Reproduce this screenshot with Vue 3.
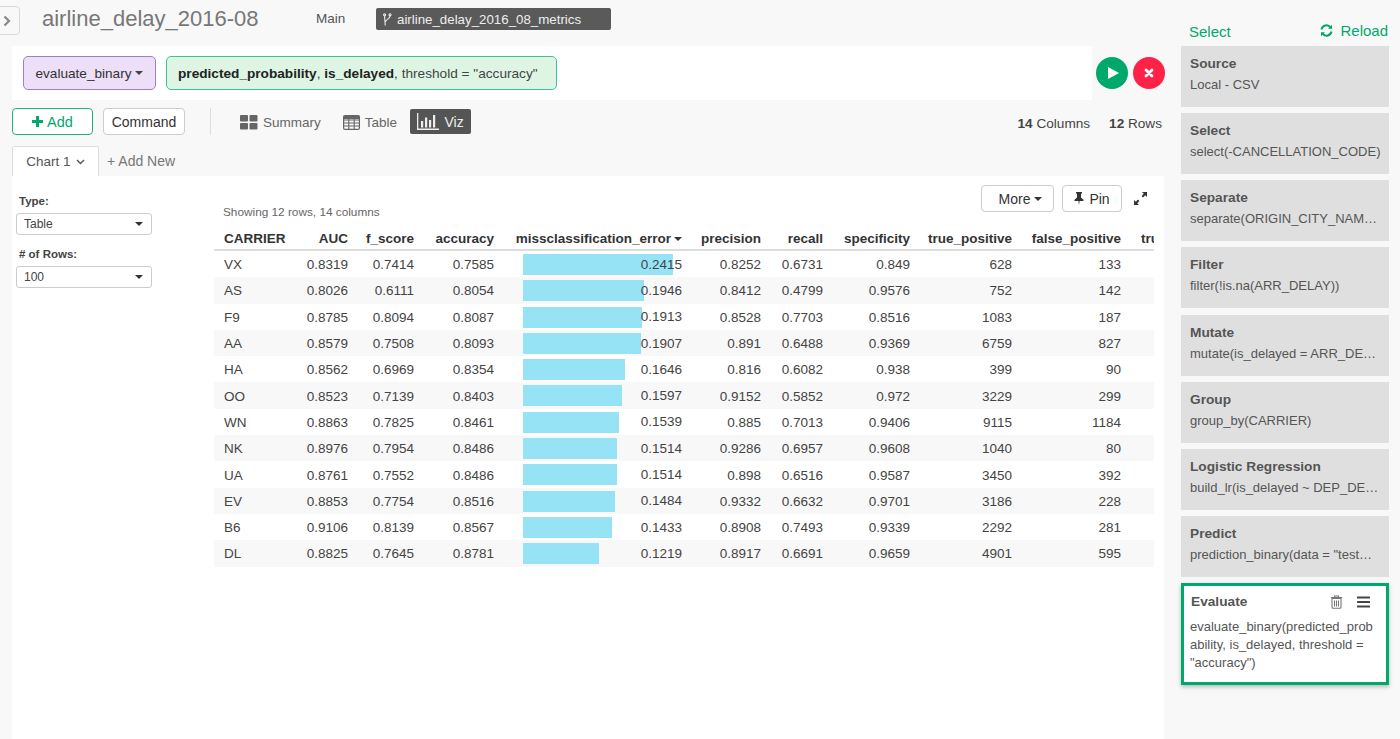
<script setup>
const columns = ['CARRIER','AUC','f_score','accuracy','missclassification_error','precision','recall','specificity','true_positive','false_positive','true_negative']
const rows = [
  ['VX','0.8319','0.7414','0.7585','0.2415','0.8252','0.6731','0.849','628','133',''],
  ['AS','0.8026','0.6111','0.8054','0.1946','0.8412','0.4799','0.9576','752','142',''],
  ['F9','0.8785','0.8094','0.8087','0.1913','0.8528','0.7703','0.8516','1083','187',''],
  ['AA','0.8579','0.7508','0.8093','0.1907','0.891','0.6488','0.9369','6759','827',''],
  ['HA','0.8562','0.6969','0.8354','0.1646','0.816','0.6082','0.938','399','90',''],
  ['OO','0.8523','0.7139','0.8403','0.1597','0.9152','0.5852','0.972','3229','299',''],
  ['WN','0.8863','0.7825','0.8461','0.1539','0.885','0.7013','0.9406','9115','1184',''],
  ['NK','0.8976','0.7954','0.8486','0.1514','0.9286','0.6957','0.9608','1040','80',''],
  ['UA','0.8761','0.7552','0.8486','0.1514','0.898','0.6516','0.9587','3450','392',''],
  ['EV','0.8853','0.7754','0.8516','0.1484','0.9332','0.6632','0.9701','3186','228',''],
  ['B6','0.9106','0.8139','0.8567','0.1433','0.8908','0.7493','0.9339','2292','281',''],
  ['DL','0.8825','0.7645','0.8781','0.1219','0.8917','0.6691','0.9659','4901','595','']
]
const barWidth = (v) => (Number(v) / 0.2415) * 150 + 'px'
const steps = [
  ['Source','Local - CSV'],
  ['Select','select(-CANCELLATION_CODE)'],
  ['Separate','separate(ORIGIN_CITY_NAM…'],
  ['Filter','filter(!is.na(ARR_DELAY))'],
  ['Mutate','mutate(is_delayed = ARR_DE…'],
  ['Group','group_by(CARRIER)'],
  ['Logistic Regression','build_lr(is_delayed ~ DEP_DE…'],
  ['Predict','prediction_binary(data = "test…']
]
</script>

<template>
  <div class="app">
    <div class="main">
      <header class="top">
        <button class="toggle">
          <svg width="8" height="12" viewBox="0 0 8 12"><path d="M1.500 1.500 6 6l-4.500 4.500" fill="none" stroke="#888" stroke-width="2.200"/></svg>
        </button>
        <h1 class="title">airline_delay_2016-08</h1>
        <span class="main-link">Main</span>
        <div class="branch">
          <svg width="9" height="13" viewBox="0 0 9 13"><g fill="none" stroke="#eee" stroke-width="1.100"><circle cx="1.600" cy="1.800" r="1"/><circle cx="7" cy="1.800" r="1"/><path d="M1.600 3c0 3 .6 5 .6 9.500M7 3c0 2.800-4 3.200-4.600 6"/></g></svg>
          <span>airline_delay_2016_08_metrics</span>
        </div>
      </header>

      <section class="command-row">
        <div class="command-box">
          <div class="fn-pill">evaluate_binary <i class="caret"></i></div>
          <div class="arg-pill"><b>predicted_probability</b>, <b>is_delayed</b>, threshold = "accuracy"</div>
        </div>
        <div class="round green">
          <svg width="14" height="14" viewBox="0 0 14 14"><path d="M2 1l11 6-11 6z" fill="#fff"/></svg>
        </div>
        <div class="round red">
          <svg width="10" height="10" viewBox="0 0 10 10"><path d="M2 2l6 6M8 2l-6 6" stroke="#fff" stroke-width="2.800" stroke-linecap="round"/></svg>
        </div>
      </section>

      <section class="toolbar">
        <button class="btn add">
          <svg width="11" height="11" viewBox="0 0 11 11"><path d="M5.500 0v11M0 5.500h11" stroke="#00a86b" stroke-width="3"/></svg>
          Add
        </button>
        <button class="btn command">Command</button>
        <span class="divider"></span>
        <div class="view">
          <svg width="18" height="15" viewBox="0 0 18 15" fill="#666"><rect x="0" y="0" width="8" height="6.500" rx="1"/><rect x="9.500" y="0" width="8" height="6.500" rx="1"/><rect x="0" y="8" width="8" height="6.500" rx="1"/><rect x="9.500" y="8" width="8" height="6.500" rx="1"/></svg>
          Summary
        </div>
        <div class="view table-view">
          <svg width="17" height="15" viewBox="0 0 17 15"><rect x="0.600" y="0.600" width="15.800" height="13.800" rx="1.500" fill="none" stroke="#666" stroke-width="1.200"/><path d="M0.600 5h15.800M0.600 8h15.800M0.600 11h15.800M5.800 1v13M11.200 1v13" stroke="#666" stroke-width="1.100"/><rect x="0.600" y="0.600" width="15.800" height="3.400" fill="#666"/></svg>
          Table
        </div>
        <div class="view viz">
          <svg width="22" height="17" viewBox="0 0 22 17" fill="#eee"><path d="M0 0h1.300v15.500H22V17H0z"/><rect x="4" y="8" width="2.200" height="6.500"/><rect x="8" y="4.500" width="2.200" height="10"/><rect x="12" y="7" width="2.200" height="7.500"/><rect x="16" y="2" width="2.200" height="12.500"/></svg>
          Viz
        </div>
        <div class="counts"><span><b>14</b> Columns</span><span><b>12</b> Rows</span></div>
      </section>

      <nav class="tabs">
        <div class="tab">Chart 1
          <svg width="9" height="6" viewBox="0 0 9 6"><path d="M1 1l3.500 3.500L8 1" fill="none" stroke="#555" stroke-width="1.400"/></svg>
        </div>
        <div class="add-new">+ Add New</div>
      </nav>

      <section class="panel">
        <aside class="filters">
          <label class="f-label">Type:</label>
          <div class="select">Table <i class="caret dark"></i></div>
          <label class="f-label rows-label"># of Rows:</label>
          <div class="select">100 <i class="caret dark"></i></div>
        </aside>
        <div class="content">
          <div class="content-top">
            <span class="showing">Showing 12 rows, 14 columns</span>
            <div class="actions">
              <button class="btn more">More <i class="caret dark"></i></button>
              <button class="btn pin">
                <svg width="10" height="13" viewBox="0 0 10 13" fill="#333"><path d="M2 0h6v1.200L7 2v3.500l2.500 2.300V9H5.600L5 13l-.6-4H.5V7.800L3 5.500V2L2 1.200z"/></svg>
                Pin
              </button>
              <svg class="expand" width="13" height="13" viewBox="0 0 13 13" fill="#333"><path d="M8 0h5v5l-1.800-1.800L9 5.400 7.600 4l2.200-2.200zM5 13H0V8l1.800 1.800L4 7.600 5.400 9l-2.200 2.200z"/></svg>
            </div>
          </div>
          <div class="table">
            <div class="tr head">
              <div v-for="(c, i) in columns" :key="c" class="cell" :class="{ left: i === 0 }">{{ c }}<i v-if="i === 4" class="caret dark sort"></i></div>
            </div>
            <div v-for="row in rows" :key="row[0]" class="tr">
              <div v-for="(v, i) in row" :key="i" class="cell" :class="{ left: i === 0, barcell: i === 4 }">
                <span v-if="i === 4" class="bar" :style="{ width: barWidth(v) }"></span>
                <span class="val">{{ v }}</span>
              </div>
            </div>
          </div>
        </div>
      </section>
    </div>

    <aside class="side">
      <div class="side-head">
        <span class="side-select">Select</span>
        <span class="reload">
          <svg width="13" height="13" viewBox="0 0 13 13" fill="none" stroke="#00a86b" stroke-width="2"><path d="M1.500 5.500A5 5 0 0 1 10.500 3.500M11.500 7.500A5 5 0 0 1 2.500 9.500"/><path d="M12 .8v4H8zM1 12.200v-4h4z" fill="#00a86b" stroke="none"/></svg>
          Reload
        </span>
      </div>
      <div v-for="s in steps" :key="s[0]" class="card">
        <div class="card-title">{{ s[0] }}</div>
        <div class="card-sub">{{ s[1] }}</div>
      </div>
      <div class="card active">
        <div class="active-head">
          <span class="card-title">Evaluate</span>
          <svg width="13" height="14" viewBox="0 0 13 14" fill="none" stroke="#777" stroke-width="1.100"><path d="M2 3.500h9V12a1.300 1.300 0 0 1-1.300 1.300H3.300A1.300 1.300 0 0 1 2 12zM.8 2.500h11.400M4.500 2.300V1h4v1.300M4.500 5.500v6M6.500 5.500v6M8.500 5.500v6"/></svg>
          <svg class="menu" width="13" height="12" viewBox="0 0 13 12" fill="#444"><rect width="13" height="2" y="0.500" rx="0.500"/><rect width="13" height="2" y="5" rx="0.500"/><rect width="13" height="2" y="9.500" rx="0.500"/></svg>
        </div>
        <div class="active-body">evaluate_binary(predicted_probability, is_delayed, threshold = "accuracy")</div>
      </div>
    </aside>
  </div>
</template>

<style>
html, body { margin: 0; background: #f8f8f8; }
</style>

<style scoped>
.app {
  display: flex;
  width: 1400px;
  height: 739px;
  overflow: hidden;
  background: #f8f8f8;
  font-family: "Liberation Sans", Arial, sans-serif;
  font-size: 13px;
  color: #444;
}
button { font-family: inherit; font-size: 13px; background: #fff; padding: 0; cursor: pointer; }
b { font-weight: 700; }
.main { width: 1165px; flex: none; display: flex; flex-direction: column; }
.top { height: 46px; display: flex; align-items: flex-start; flex: none; }
.toggle {
  width: 24px; height: 29px; margin: 6px 0 0 -4px; border: 1px solid #d8d8d8; border-radius: 4px;
  display: flex; align-items: center; justify-content: flex-end; padding-right: 8px; background: #f8f8f8; box-sizing: border-box;
}
.title { margin: 5px 0 0 22px; font-size: 22px; line-height: 27px; font-weight: 400; color: #777; width: 252px; white-space: nowrap; }
.main-link { margin: 11px 0 0 22px; width: 60px; color: #555; line-height: 16px; font-size: 13.500px; }
.branch {
  margin-top: 8px; width: 235px; height: 22px; box-sizing: border-box; background: #5a5a5a; border-radius: 2px;
  color: #eee; display: flex; align-items: center; gap: 5px; padding-left: 7px; font-size: 13.300px;
}
.command-row { display: flex; height: 54px; flex: none; margin-left: 12px; align-items: center; }
.command-box {
  width: 1080px; height: 54px; background: #fff; box-sizing: border-box; padding: 10px 11px;
  display: flex; gap: 10px; margin-right: 4px;
}
.fn-pill {
  width: 133px; height: 34px; box-sizing: border-box; background: #ecdff7; border: 1px solid #a27fc2; border-radius: 5px;
  display: flex; align-items: center; justify-content: center; gap: 4px; color: #333; font-size: 13.600px;
}
.arg-pill {
  width: 391px; height: 34px; box-sizing: border-box; background: #dff5e4; border: 1px solid #3cc39a; border-radius: 5px;
  display: flex; align-items: center; padding-left: 11px; color: #444; white-space: pre; font-size: 13.650px;
}
.arg-pill b { color: #222; }
.caret { display: inline-block; border: 4px solid transparent; border-top-color: #444; border-bottom: 0; }
.caret.dark { border-top-color: #333; }
.round { width: 32px; height: 32px; border-radius: 50%; display: flex; align-items: center; justify-content: center; flex: none; }
.round.green { background: #00a86b; margin-right: 5px; padding-left: 1px; box-sizing: border-box; }
.round.red { background: #ff2247; }
.toolbar { margin: 8px 0 0 12px; height: 27px; display: flex; align-items: center; flex: none; }
.btn { height: 27px; box-sizing: border-box; border: 1px solid #ccc; border-radius: 4px; color: #333; display: flex; align-items: center; justify-content: center; }
.add { width: 81px; border-color: #1fb384; color: #00a86b; gap: 4px; font-size: 14.500px; }
.command { width: 82px; margin-left: 10px; font-size: 14px; }
.divider { width: 1px; height: 27px; background: #ddd; margin: 0 29px 0 25px; }
.view { display: flex; align-items: center; gap: 5px; color: #666; height: 25px; margin-top: 2px; font-size: 13.500px; }
.table-view { margin-left: 22px; }
.viz { margin-left: 13px; margin-top: 0; width: 61px; background: #555; color: #eee; justify-content: center; border-radius: 2px; font-size: 14px; }
.counts { margin-left: auto; margin-right: 3px; display: flex; gap: 19px; margin-top: 4px; font-size: 13.600px; color: #444; }
.tabs { margin: 11px 0 0 12px; height: 30px; display: flex; flex: none; }
.tab {
  width: 87px; box-sizing: border-box; background: #fff; border: 1px solid #ddd; border-bottom: 0;
  display: flex; align-items: center; justify-content: center; gap: 5px; color: #555; font-size: 13.500px; border-radius: 2px 2px 0 0;
}
.add-new { margin-left: 8px; display: flex; align-items: center; color: #777; font-size: 14px; }
.panel { margin-left: 12px; width: 1152px; flex: 1; min-height: 0; background: #fff; display: flex; }
.filters { width: 202px; flex: none; box-sizing: border-box; padding: 19px 0 0 4px; }
.f-label { display: block; font-size: 11.500px; font-weight: 700; color: #444; margin: 0 0 5px 3px; line-height: 13px; }
.rows-label { margin-top: 13px; }
.select {
  width: 136px; height: 22px; box-sizing: border-box; border: 1px solid #ccc; border-radius: 3px; background: #fff;
  display: flex; align-items: center; justify-content: space-between; padding: 0 8px 0 7px; font-size: 12px; color: #444;
}
.content { width: 940px; flex: none; display: flex; flex-direction: column; }
.content-top { height: 50px; position: relative; flex: none; }
.showing { position: absolute; left: 9px; top: 29px; font-size: 11.800px; line-height: 14px; color: #666; }
.actions { display: flex; justify-content: flex-end; align-items: center; padding: 9px 7px 0 0; gap: 8px; }
.more { width: 73px; gap: 4px; font-size: 14px; padding-left: 6px; }
.pin { width: 60px; gap: 5px; font-size: 14px; }
.expand { margin-left: 4px; }
.table { overflow: hidden; width: 940px; position: relative; }
.tr {
  display: grid;
  grid-template-columns: 82px 52px 66px 80px 188px 79px 62px 87px 102px 109px 100px;
  height: 26.300px;
  width: 1007px;
  align-items: center;
}
.tr:nth-child(odd):not(.head) { background: #f8f8f8; }
.tr.head { height: 25px; font-weight: 700; color: #333; box-shadow: inset 0 -2px 0 #ddd; }
.cell { text-align: right; white-space: nowrap; line-height: 18px; font-size: 13.500px; position: relative; height: 18px; }
.tr:not(.head) .cell:not(.barcell) { padding-top: 2px; }
.cell.left { text-align: left; padding-left: 10px; }
.head .cell:last-child { text-align: left; padding-left: 20px; }
.sort { margin-left: 3px; vertical-align: 2px; }
.barcell { height: 100%; display: flex; align-items: center; justify-content: flex-end; padding-top: 1px; box-sizing: border-box; }
.bar { position: absolute; left: 29px; top: 3px; height: 21px; background: #97e3f6; }
.val { position: relative; }
.side { width: 235px; flex: none; box-sizing: border-box; padding-left: 16px; }
.side-head { width: 208px; height: 46px; box-sizing: border-box; padding: 22px 1px 0 8px; display: flex; justify-content: space-between; color: #00a86b; font-size: 15px; line-height: 17px; }
.side-select { padding-top: 1px; }
.reload { display: flex; align-items: center; gap: 7px; height: 16px; }
.card { width: 208px; height: 61px; margin-bottom: 6.140px; box-sizing: border-box; background: #dfdfdf; padding: 10px 0 0 9px; color: #555; }
.card-title { font-weight: 700; font-size: 13.700px; line-height: 16px; color: #555; }
.card-sub { margin-top: 5px; line-height: 16px; white-space: nowrap; font-size: 13px; }
.card.active { height: 102px; background: #fff; border: 3px solid #00a86b; padding: 8px 6px 0; box-shadow: 0 2px 4px rgba(0,0,0,.25); }
.active-head { display: flex; align-items: center; padding: 0 0 0 1px; height: 16px; }
.active-head .card-title { flex: 1; }
.menu { margin: 0 10px 0 14px; }
.active-body { margin-top: 8px; line-height: 18px; font-size: 13px; overflow-wrap: anywhere; color: #555; }
</style>
